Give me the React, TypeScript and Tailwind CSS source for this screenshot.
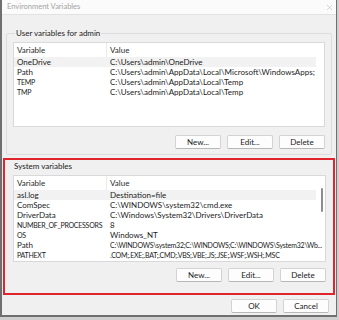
import { X } from 'lucide-react';

const userVars = [
  { name: 'OneDrive', value: 'C:\\Users\\admin\\OneDrive' },
  { name: 'Path', value: 'C:\\Users\\admin\\AppData\\Local\\Microsoft\\WindowsApps;' },
  { name: 'TEMP', value: 'C:\\Users\\admin\\AppData\\Local\\Temp' },
  { name: 'TMP', value: 'C:\\Users\\admin\\AppData\\Local\\Temp' },
];

const systemVars = [
  { name: 'asl.log', value: 'Destination=file' },
  { name: 'ComSpec', value: 'C:\\WINDOWS\\system32\\cmd.exe' },
  { name: 'DriverData', value: 'C:\\Windows\\System32\\Drivers\\DriverData' },
  { name: 'NUMBER_OF_PROCESSORS', value: '8' },
  { name: 'OS', value: 'Windows_NT' },
  { name: 'Path', value: 'C:\\WINDOWS\\system32;C:\\WINDOWS;C:\\WINDOWS\\System32\\Wb...' },
  { name: 'PATHEXT', value: '.COM;.EXE;.BAT;.CMD;.VBS;.VBE;.JS;.JSE;.WSF;.WSH;.MSC' },
];

// Segoe UI capitals run narrower than Lato's, so mostly-uppercase strings get a tighter size
const isCaps = (s: string) => (s.match(/[A-Z]/g) || []).length > (s.match(/[a-z]/g) || []).length;
const cellText = (s: string) => (isCaps(s) ? 'text-[7px] tracking-[-0.25px]' : '');

function WinButton({ label }: { label: string }) {
  return (
    <button className="w-[46px] h-[14px] rounded-[2px] border border-[#d3d3d3] border-b-[#b8b8b8] bg-[#fdfdfd] text-[#1b1b1b] leading-none">
      {label}
    </button>
  );
}

function VarList({ rows, height, scrollbar }: { rows: { name: string; value: string }[]; height: string; scrollbar?: boolean }) {
  return (
    <div className={`relative bg-white border border-[#d9d9d9] overflow-hidden ${height}`}>
      <div className="flex h-[14px] items-center text-[#2a2a2a]">
        <div className="w-[93px] shrink-0 pl-[3px] border-r border-[#ebebeb] h-full flex items-center">Variable</div>
        <div className="pl-[3px]">Value</div>
      </div>
      {rows.map((r, i) => (
        <div key={r.name} className={`flex h-[10px] items-center w-[302px] whitespace-nowrap ${i === 0 ? 'bg-[#f2f2f2]' : ''}`}>
          <div className={`w-[93px] shrink-0 pl-[3px] overflow-hidden ${cellText(r.name)}`}>{r.name}</div>
          <div className={`pl-[3px] ${cellText(r.value)}`}>{r.value}</div>
        </div>
      ))}
      {scrollbar && <div className="absolute right-[2px] top-[12px] w-[2px] h-[24px] rounded-full bg-[#8c8c8c]" />}
    </div>
  );
}

export default function App() {
  return (
    <div className="w-[339px] h-[320px] bg-[#cfcfcf] overflow-hidden font-['Lato',sans-serif] text-[8px] leading-[10px] text-[#1b1b1b]">
      <div className="w-[337px] h-[317px] flex flex-col bg-[#f0f0f0] border-l-2 border-b-2 border-r border-[#6f6f6f]">
        {/* title bar */}
        <div className="h-[15px] shrink-0 flex items-center justify-between bg-[#fbfbfb] border-b border-[#e2e2e2] pl-[5px] pr-[2px]">
          <span className="text-[7.5px] text-[#a3a3a3]">Environment Variables</span>
          <X size={9} strokeWidth={1.2} className="text-[#a8a8a8]" />
        </div>

        {/* user variables */}
        <fieldset className="mt-[13px] mx-[4px] border border-[#dcdcdc] rounded-[2px] px-[6px] pb-[5px]">
          <legend className="ml-[2px] px-[1px] h-[10px]">User variables for admin</legend>
          <div className="mt-[4px]">
            <VarList rows={userVars} height="h-[85px]" />
          </div>
          <div className="mt-[8px] flex justify-end gap-[6px]">
            <WinButton label="New..." />
            <WinButton label="Edit..." />
            <WinButton label="Delete" />
          </div>
        </fieldset>

        {/* system variables, outlined in red */}
        <div className="mt-[3px] ml-[1px] w-[332px] border-2 border-[#e0262c] pl-[8px] pr-[7px] pt-[1px] pb-[11px]">
          <div className="h-[10px] pl-[1px]">System variables</div>
          <div className="mt-[4px]">
            <VarList rows={systemVars} height="h-[87px]" scrollbar />
          </div>
          <div className="mt-[6px] flex justify-end gap-[6px]">
            <WinButton label="New..." />
            <WinButton label="Edit..." />
            <WinButton label="Delete" />
          </div>
        </div>

        <div className="mt-[4px] flex justify-end gap-[6px] pr-[7px]">
          <WinButton label="OK" />
          <WinButton label="Cancel" />
        </div>
      </div>
    </div>
  );
}
